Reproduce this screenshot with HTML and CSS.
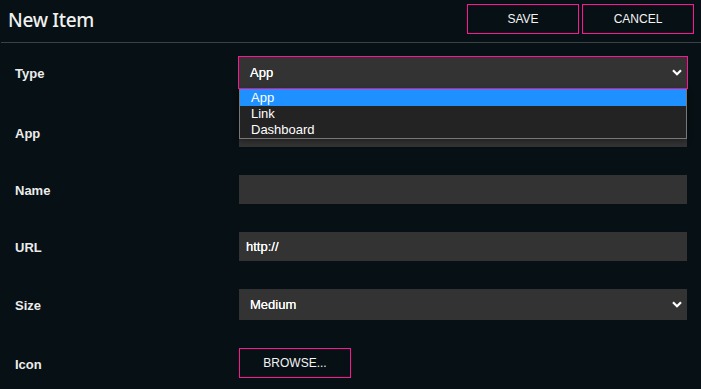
FILE: index.html
```html
<!DOCTYPE html>
<html lang="en">
<head>
  <meta charset="UTF-8">
  <meta name="viewport" content="width=device-width, initial-scale=1.0">
  <title>New Item</title>
  <link rel="stylesheet" href="styles.css">
</head>
<body>

  <header class="topbar">
    <h1 class="title">New Item</h1>
    <div class="actions">
      <button class="btn" type="button">SAVE</button>
      <button class="btn" type="button">CANCEL</button>
    </div>
  </header>

  <form class="item-form">
    <div class="field">
      <label class="field-label">Type</label>
      <div class="select select-open">
        <span class="select-value">App</span>
        <svg class="chevron" width="10" height="7" viewBox="0 0 10 7"><path d="M1 1.2 L5 5.2 L9 1.2" fill="none" stroke="#fff" stroke-width="2.2"/></svg>

        <ul class="select-menu">
          <li class="select-option option-active">App</li>
          <li class="select-option">Link</li>
          <li class="select-option">Dashboard</li>
        </ul>
      </div>
    </div>

    <div class="field field-app">
      <label class="field-label">App</label>
      <input class="input" type="text">
    </div>

    <div class="field">
      <label class="field-label">Name</label>
      <input class="input" type="text">
    </div>

    <div class="field">
      <label class="field-label">URL</label>
      <input class="input" type="text" value="http://">
    </div>

    <div class="field">
      <label class="field-label">Size</label>
      <div class="select">
        <span class="select-value">Medium</span>
        <svg class="chevron" width="10" height="7" viewBox="0 0 10 7"><path d="M1 1.2 L5 5.2 L9 1.2" fill="none" stroke="#fff" stroke-width="2.2"/></svg>
      </div>
    </div>

    <div class="field">
      <label class="field-label">Icon</label>
      <div>
        <button class="btn" type="button">BROWSE...</button>
      </div>
    </div>
  </form>

</body>
</html>
```

FILE: styles.css
```css
* {
  margin: 0;
  padding: 0;

  box-sizing: border-box;
  font-family: 'Liberation Sans', Arial, sans-serif;
}

body {
  background: #071014;
  color: #eeeeee;
}

ul {
  list-style: none;
}

/* Header */

.topbar {
  display: flex;
  justify-content: space-between;
  align-items: flex-start;

  height: 43px;
  margin-left: 1px;
  padding: 4px 7px 0 7px;

  border-bottom: 1px solid #3a4245;
}

.title {
  margin-top: 3px;

  font-family: 'Noto Sans', sans-serif;
  font-size: 19px;
  font-weight: 500;
  line-height: 26px;
  letter-spacing: -0.3px;
  color: #f0f0f0;
}

.actions {
  display: flex;
  gap: 3px;
}

.btn {
  width: 112px;
  height: 30px;

  background: transparent;
  border: 1px solid #ff1493;
  color: #f4f4f4;

  font-size: 12px;
  cursor: pointer;
}

/* Form */

.item-form {
  display: flex;
  flex-direction: column;
  gap: 28px;

  padding: 14px 0 0 15px;
}

.field {
  display: grid;
  grid-template-columns: 224px 448px;
  align-items: center;
}

.field-app {
  margin-top: 2px;
}

.field-label {
  padding-top: 2px;

  font-size: 13px;
  font-weight: 700;
  color: #ececec;
}

.input {
  width: 448px;
  height: 29px;
  padding: 0 7px;

  background: #333333;
  border: none;
  outline: none;
  color: #ffffff;

  font-size: 13px;
  text-shadow: 0 0 0.4px #ffffff;
}

.select {
  position: relative;
  display: flex;
  align-items: center;
  justify-content: space-between;

  height: 31px;
  padding: 0 5px 0 11px;

  background: #333333;
  color: #ffffff;

  font-size: 13px;
}

.select-value {
  text-shadow: 0 0 0.4px #ffffff;
}

/* focused select keeps a pink ring around it */
.select-open {
  outline: 1px solid #ff1493;
}

.chevron {
  display: block;
}

/* Open dropdown list */

.select-menu {
  position: absolute;
  top: calc(100% + 1px);
  left: 0;
  right: 0;
  z-index: 2;

  background: #232323;
  border: 1px solid #777777;
  border-top: none;
  box-shadow: 0 2px 6px rgba(0, 0, 0, 0.4);
}

.select-option {
  height: 16px;
  padding-left: 11px;

  font-size: 13px;
  line-height: 16px;
  color: #ffffff;
}

.option-active {
  height: 17px;
  line-height: 17px;
  background: #1e90ff;
}
```
